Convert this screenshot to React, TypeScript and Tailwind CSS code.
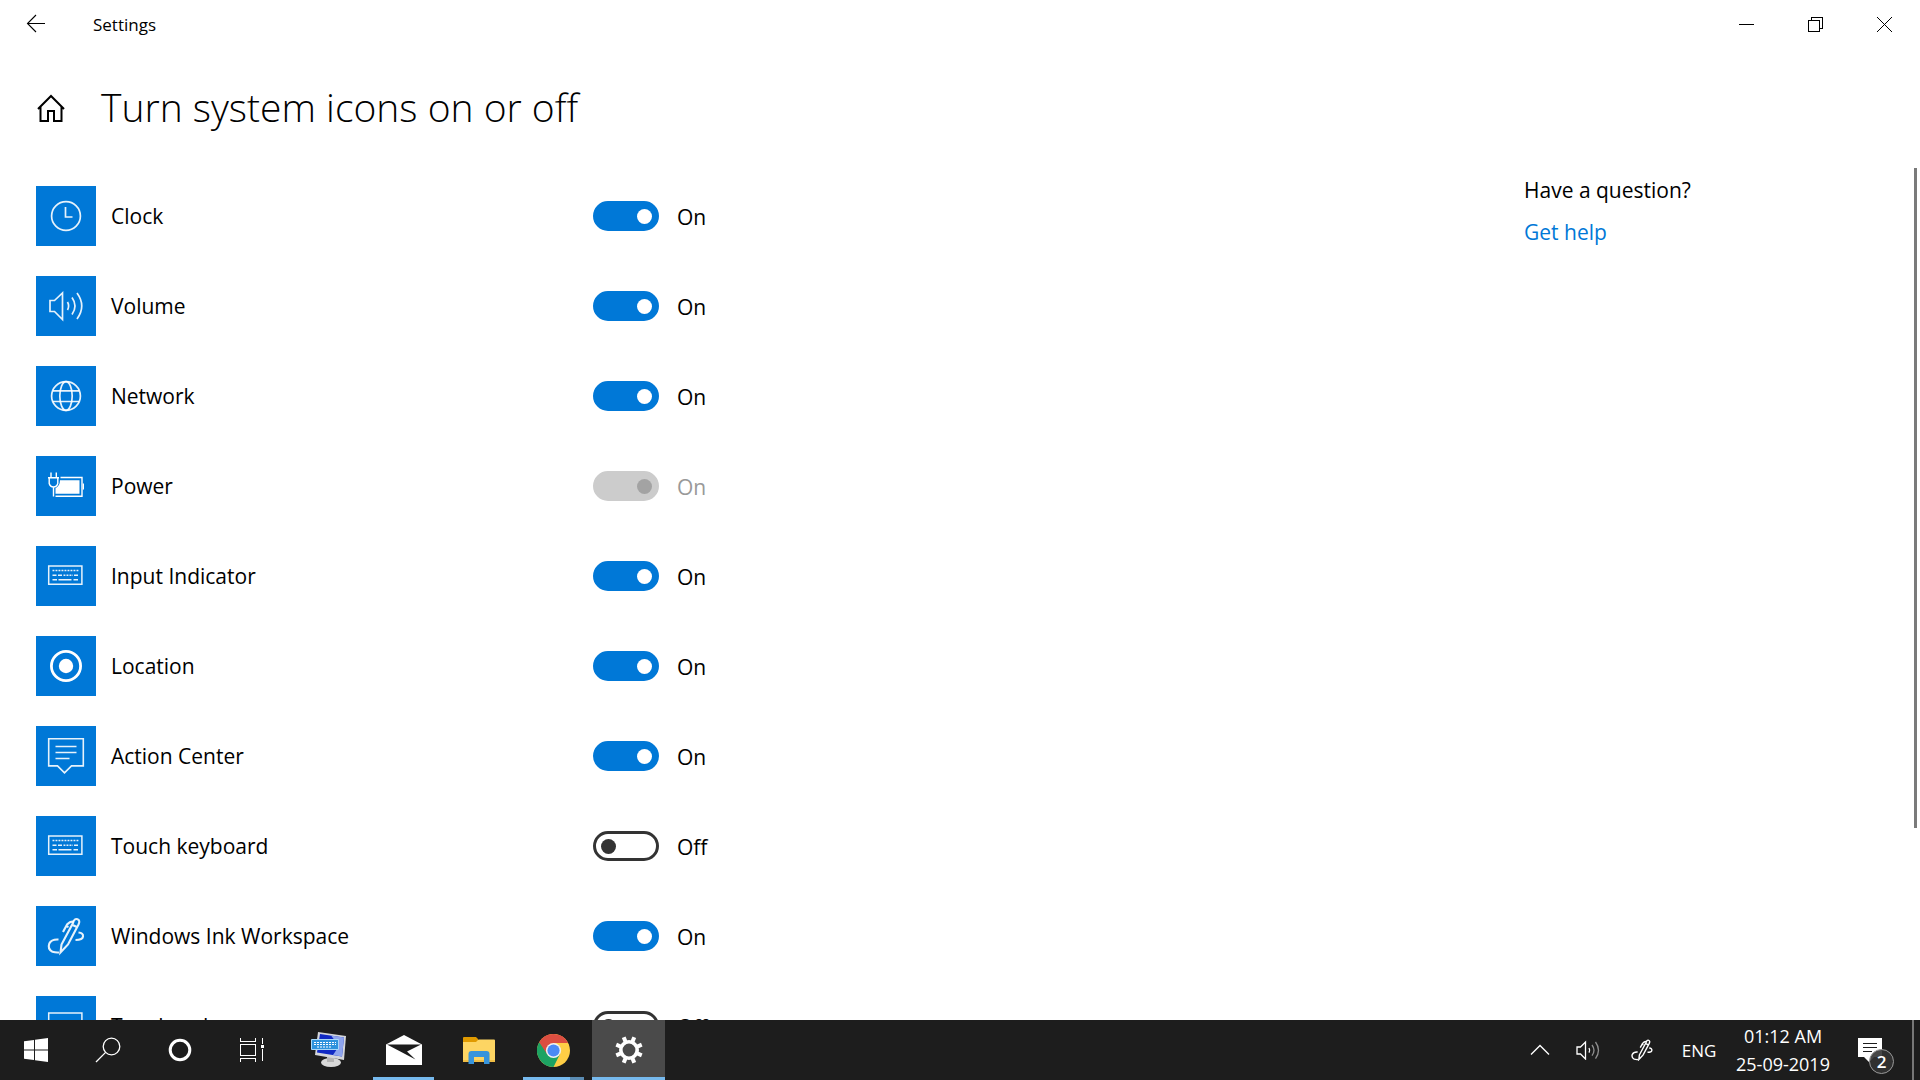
import React, { useState } from "react";
import type { ReactNode } from "react";

const stroke = { fill: "none", stroke: "currentColor" } as const;

function ClockIcon() {
  return (
    <svg viewBox="0 0 60 60" className="size-15" {...stroke} strokeWidth="1.7" aria-hidden="true">
      <circle cx="30" cy="30" r="14.4" />
      <path d="M29.5 21v10h7" />
    </svg>
  );
}

function VolumeIcon() {
  return (
    <svg viewBox="0 0 60 60" className="size-15" {...stroke} strokeWidth="1.7" aria-hidden="true">
      <path d="M14 24.5h4.5l8-7.5v26.5l-8-8H14z" />
      <path d="M31.5 26q2.2 4 0 8M36 21.500q6 8.500 0 17M41 17q9.500 13 0 26" />
    </svg>
  );
}

function NetworkIcon() {
  return (
    <svg viewBox="0 0 60 60" className="size-15" {...stroke} strokeWidth="1.7" aria-hidden="true">
      <circle cx="30" cy="30" r="14.4" />
      <ellipse cx="30" cy="30" rx="6.2" ry="14.4" />
      <path d="M17 24.8h26M17 35.5h26" />
    </svg>
  );
}

function PowerIcon() {
  return (
    <svg viewBox="0 0 60 60" className="size-15 text-white" {...stroke} strokeWidth="1.4" aria-hidden="true">
      <path d="M24.5 21.5h21.5v18.800H19.500" />
      <path d="M46.700 27.500h1.300v6h-1.300z" fill="currentColor" stroke="none" />
      <path d="M24 24.200h19.500v13.500H19.500v-5.500q4.500-2.500 4.500-8z" fill="currentColor" stroke="none" />
      <path d="M12 21.800h11M13.200 22v5.500q1 3.500 4.300 3.500t4.300-3.500V22M15 21.500v-5M20.300 21.500v-5M17.500 31v9.500" />
    </svg>
  );
}

function KeyboardIcon() {
  return (
    <svg viewBox="0 0 60 60" className="size-15" {...stroke} strokeWidth="1.5" aria-hidden="true">
      <path d="M12.700 19.900h33.200v18.300H12.700z" />
      <path d="M16.500 24.600h26" strokeDasharray="1.900 1.100" />
      <path d="M16.500 29.200h4M22 29.200h15" strokeDasharray="4 1.500 1.900 1.100 1.900 1.100 1.900 1.100 1.900 1.100 1.900 1.100" />
      <path d="M38 29.200h4M16.500 33.700h4.500M22.500 33.700h13M37.500 33.700h4.500" />
    </svg>
  );
}

function LocationIcon() {
  return (
    <svg viewBox="0 0 60 60" className="size-15 text-white" {...stroke} strokeWidth="2.8" aria-hidden="true">
      <circle cx="30" cy="30" r="14.6" />
      <circle cx="30" cy="30" r="7.2" fill="currentColor" stroke="none" />
    </svg>
  );
}

function ActionCenterIcon() {
  return (
    <svg viewBox="0 0 60 60" className="size-15" {...stroke} strokeWidth="1.6" aria-hidden="true">
      <path d="M12.700 12.700h34.600v27.200H35.500l-7 7-7-7h-8.800z" />
      <path d="M19.500 20.500h21M19.500 26.500h21M19.500 32.500h14" />
    </svg>
  );
}

function PenPaths() {
  return (
    <>
      <path d="M24.500 46.500l1-8 11.500-21.500q1.500-5 4.500-3.800t1 5.300l-10.500 20zM35.500 18.500l6.500 3" />
      <path d="M38 15.500q-4-.5-7 3l-4 7.500M30 20l2.500 1" />
      <path d="M22.500 33.500q-7-.5-9.200 4-2 5.500 3.200 8.300 3 1 6.500 .7" />
      <path d="M42.500 26.500q5 .5 4.500 4-.5 3.500-7.500 3.500" />
    </>
  );
}

function InkIcon() {
  return (
    <svg viewBox="0 0 60 60" className="size-15" {...stroke} strokeWidth="2.1" aria-hidden="true">
      <PenPaths />
    </svg>
  );
}

function TouchpadIcon() {
  return (
    <svg viewBox="0 0 60 60" className="size-15" {...stroke} strokeWidth="1.5" aria-hidden="true">
      <path d="M12.700 16.900h33.200v25H12.700zM12.700 35h33.200M29.300 35v7" />
    </svg>
  );
}

type Item = { name: string; icon: ReactNode; on: boolean; disabled?: boolean };

const items: Item[] = [
  { name: "Clock", icon: <ClockIcon />, on: true },
  { name: "Volume", icon: <VolumeIcon />, on: true },
  { name: "Network", icon: <NetworkIcon />, on: true },
  { name: "Power", icon: <PowerIcon />, on: true, disabled: true },
  { name: "Input Indicator", icon: <KeyboardIcon />, on: true },
  { name: "Location", icon: <LocationIcon />, on: true },
  { name: "Action Center", icon: <ActionCenterIcon />, on: true },
  { name: "Touch keyboard", icon: <KeyboardIcon />, on: false },
  { name: "Windows Ink Workspace", icon: <InkIcon />, on: true },
  { name: "Touchpad", icon: <TouchpadIcon />, on: false },
];

function SettingRow({ item, id }: { item: Item; id: string }) {
  const [on, setOn] = useState(item.on);
  return (
    <li className="flex h-15 shrink-0 items-center">
      <span className="size-15 shrink-0 bg-[#0078d7] text-white/90">{item.icon}</span>
      <label htmlFor={id} className="w-[497px] pl-[15px]">
        {item.name}
      </label>
      <input
        id={id}
        type="checkbox"
        role="switch"
        checked={on}
        disabled={item.disabled}
        onChange={(e) => setOn(e.target.checked)}
        className="flex h-[30px] w-[66px] shrink-0 appearance-none items-center rounded-full border-3 border-[#333] px-[5px] before:size-[15px] before:rounded-full before:bg-[#333] checked:justify-end checked:border-[#0078d7] checked:bg-[#0078d7] checked:px-1 checked:before:bg-white disabled:border-[#ccc] disabled:bg-[#ccc] disabled:before:bg-[#a3a3a3]"
      />
      <span className={item.disabled ? "pt-0.5 pl-[18px] text-[#999]" : "pt-0.5 pl-[18px]"}>{on ? "On" : "Off"}</span>
    </li>
  );
}

function TitleBar() {
  return (
    <header className="flex h-12 shrink-0 items-center">
      <button aria-label="Back" className="flex h-12 w-[72px] items-center justify-center">
        <svg width="20" height="20" viewBox="0 0 20 20" {...stroke} strokeWidth="1.1" aria-hidden="true">
          <path d="M19 9.500H2M10 1L1.500 9.500 10 18" />
        </svg>
      </button>
      <span className="flex-1 pt-px pl-[21px] text-[17px]">Settings</span>
      <div className="flex pr-px">
        <button aria-label="Minimize" className="flex h-12 w-[69px] items-center justify-center">
          <svg width="15" height="15" viewBox="0 0 15 15" {...stroke} shapeRendering="crispEdges" aria-hidden="true">
            <path d="M0 7.500h15" />
          </svg>
        </button>
        <button aria-label="Restore" className="flex h-12 w-[69px] items-center justify-center">
          <svg width="15" height="15" viewBox="0 0 15 15" {...stroke} shapeRendering="crispEdges" aria-hidden="true">
            <path d="M.5 3.500h11v11H.5zM3.500 3.500v-3h11v11h-3" />
          </svg>
        </button>
        <button aria-label="Close" className="flex h-12 w-[69px] items-center justify-center">
          <svg width="15" height="15" viewBox="0 0 15 15" {...stroke} aria-hidden="true">
            <path d="M0 0l15 15M15 0L0 15" />
          </svg>
        </button>
      </div>
    </header>
  );
}

function MonitorIcon() {
  return (
    <svg width="36" height="38" viewBox="0 0 36 38" aria-hidden="true">
      <ellipse cx="20" cy="31.500" rx="10" ry="4.500" fill="#d9d9d9" />
      <path d="M16 25h7v6h-7z" fill="#b5b5b5" />
      <path d="M7 1l28 4-2 24-29-5z" fill="#d4d6da" />
      <path d="M9 3l24 3.500-2 19L6 21.500z" fill="#1029c4" />
      <path d="M20 4.600L33 6.500l-2 19-9-1.500 6-9z" fill="#8ea4ee" />
      <path d="M.5 8.500h27v10H.5z" fill="#2f93dd" stroke="#a9d8f8" />
      <path d="M3 11.500h22M3 13.500h22M6 16h15" stroke="#fff" strokeWidth="1.2" strokeDasharray="2 1" />
    </svg>
  );
}

function MailIcon() {
  return (
    <svg width="36" height="30" viewBox="0 0 36 30" aria-hidden="true">
      <path d="M0 9.500L18 0l18 9.500V30H0z" fill="#fff" />
      <path d="M1 9.500h34L21 16.500l8.500 8z" fill="#1d1d1d" />
    </svg>
  );
}

function FolderIcon() {
  return (
    <svg width="32" height="27" viewBox="0 0 32 27" aria-hidden="true">
      <path d="M0 1q0-1 1-1h12l2 2v4H0z" fill="#e09a00" />
      <path d="M0 5h13l2.500-2.500H31q1 0 1 1V25H0z" fill="#fdd563" />
      <path d="M0 23h32v2H0z" fill="#f0bd45" />
      <path d="M5.500 27V17q0-3 3-3h15q3 0 3 3v10h-5.500v-7H11v7z" fill="#3794dc" />
    </svg>
  );
}

function ChromeIcon() {
  return (
    <svg width="33" height="33" viewBox="-16.5 -16.5 33 33" aria-hidden="true">
      <circle r="16.5" fill="#ffce45" />
      <path d="M0 0L-14.300-8.250A16.500 16.500 0 0 0 0 16.500L6.500 3.500z" fill="#1da362" />
      <path d="M-6.500 3.500L-14.300-8.250A16.500 16.500 0 0 1 14.600-7.600H0z" fill="#dc4e41" />
      <circle r="7.6" fill="#f1f1f1" />
      <circle r="6.1" fill="#4a8af5" />
    </svg>
  );
}

function GearIcon() {
  return (
    <svg width="28" height="28" viewBox="-14 -14 28 28" {...stroke} aria-hidden="true">
      <circle r="8.2" strokeWidth="3.6" />
      {[22.5, 67.5, 112.5, 157.5, 202.5, 247.5, 292.5, 337.5].map((a) => (
        <path key={a} d="M-2-9h4v-4.800h-4z" fill="currentColor" stroke="none" transform={`rotate(${a})`} />
      ))}
    </svg>
  );
}

function TaskButton({ label, children }: { label: string; children: ReactNode }) {
  return (
    <button aria-label={label} className="flex w-[72px] items-center justify-center">
      {children}
    </button>
  );
}

function Taskbar() {
  return (
    <footer className="flex h-15 shrink-0 bg-[#1d1d1d] text-white">
      <TaskButton label="Start">
        <svg width="24" height="24" viewBox="0 0 24 24" fill="currentColor" aria-hidden="true">
          <path d="M0 3.300l10-1.300v9.500H0zM11 1.800L24 0v11.500H11zM0 12.500h10V22L0 20.700zM11 12.500h13V24l-13-1.800z" />
        </svg>
      </TaskButton>
      <TaskButton label="Search">
        <svg width="26" height="26" viewBox="0 0 26 26" {...stroke} strokeWidth="1.3" aria-hidden="true">
          <circle cx="16.500" cy="9.500" r="8.300" />
          <path d="M10.600 15.400L1 25" />
        </svg>
      </TaskButton>
      <TaskButton label="Cortana">
        <svg width="24" height="24" viewBox="0 0 24 24" {...stroke} strokeWidth="3" aria-hidden="true">
          <circle cx="12" cy="12" r="9.8" />
        </svg>
      </TaskButton>
      <TaskButton label="Task View">
        <svg width="25" height="24" viewBox="0 0 25 24" {...stroke} shapeRendering="crispEdges" aria-hidden="true">
          <path d="M.5 0v3.500h15V0M.5 6.500h15v11H.5zM.5 24v-3.500h15V24M22.500 0v6M22.500 11v12" />
          <path d="M21 7h3v3h-3z" fill="currentColor" stroke="none" />
        </svg>
      </TaskButton>
      <div className="flex gap-0.5 pl-1">
        <button aria-label="On-Screen Keyboard" className="flex w-[73px] items-center justify-center">
          <MonitorIcon />
        </button>
        <button aria-label="Mail" className="flex w-[73px] flex-col items-center">
          <span className="flex flex-1 items-center">
            <MailIcon />
          </span>
          <span className="-mt-[3px] h-[3px] w-[61px] bg-[#76b9ed]" />
        </button>
        <button aria-label="File Explorer" className="flex w-[73px] items-center justify-center">
          <FolderIcon />
        </button>
        <button aria-label="Google Chrome" className="flex w-[73px] flex-col items-center">
          <span className="flex flex-1 items-center">
            <ChromeIcon />
          </span>
          <span className="-mt-[3px] h-[3px] w-[61px] border-r-[14px] border-[#5b8cb3] bg-[#76b9ed]" />
        </button>
        <button aria-label="Settings" className="flex w-[73px] flex-col items-center bg-[#4a4a4a]">
          <span className="flex flex-1 items-center">
            <GearIcon />
          </span>
          <span className="-mt-[3px] h-[3px] w-full bg-[#76b9ed]" />
        </button>
      </div>
      <div className="ml-auto flex items-center">
        <button aria-label="Show hidden icons" className="flex h-full w-12 items-center justify-center">
          <svg width="20" height="12" viewBox="0 0 20 12" {...stroke} strokeWidth="1.4" aria-hidden="true">
            <path d="M1 10.500l9-9 9 9" />
          </svg>
        </button>
        <button aria-label="Volume" className="flex h-full w-12 items-center justify-center">
          <svg width="24" height="20" viewBox="0 0 24 20" {...stroke} strokeWidth="1.3" aria-hidden="true">
            <path d="M1 7h3.500L9.500 2v17l-5-5H1z" />
            <path d="M13 8q1.500 2.300 0 4.600" />
            <path d="M16 5q4 5.300 0 10.600M19.500 2q6 8.300 0 16.600" opacity=".5" />
          </svg>
        </button>
        <button aria-label="Windows Ink Workspace" className="flex h-full w-15 items-center justify-center">
          <svg width="22" height="22" viewBox="11 11 38 38" {...stroke} strokeWidth="2.4" aria-hidden="true">
            <PenPaths />
          </svg>
        </button>
        <button className="h-full w-[54px] pt-px text-[17px]">ENG</button>
        <button className="flex h-full w-[114px] flex-col items-center justify-center text-[18px] leading-7">
          <time>01:12 AM</time>
          <time>25-09-2019</time>
        </button>
        <button aria-label="Action Center, 2 notifications" className="relative flex h-full w-[72px] items-center pl-[18px]">
          <svg width="24" height="24" viewBox="0 0 24 24" aria-hidden="true">
            <path d="M0 0h24v19H16l-5 5-5-5H0z" fill="#fff" />
            <path d="M5 5.500h14M5 9.500h14M5 13.500h9" stroke="#1d1d1d" />
          </svg>
          <span className="absolute top-[29px] left-[29px] flex size-[25px] items-center justify-center rounded-full border border-[#999] bg-[#333]/90 text-[17px] font-semibold">
            2
          </span>
        </button>
        <button aria-label="Show desktop" className="h-full w-2 border-l-2 border-[#777]" />
      </div>
    </footer>
  );
}

export default function App() {
  return (
    <div className="flex h-screen flex-col bg-white font-['Open_Sans','Noto_Sans',sans-serif] text-[21px] leading-7 text-black">
      <TitleBar />
      <div className="flex h-[120px] shrink-0 items-center pl-9">
        <button aria-label="Home" className="flex h-15 items-center">
          <svg width="29" height="28" viewBox="0 0 29 28" {...stroke} strokeWidth="2" aria-hidden="true">
            <path d="M2 15L15 2l13 13M4.500 13v14H12V17h6v10h7.500V13" />
          </svg>
        </button>
        <h1 className="pb-0.5 pl-9 text-[39px] leading-[52px] font-light">Turn system icons on or off</h1>
      </div>
      <main className="flex min-h-0 flex-1 overflow-hidden">
        <ul className="flex flex-1 flex-col gap-[30px] pt-[18px] pl-9">
          {items.map((item, i) => (
            <SettingRow key={item.name} item={item} id={`system-icon-${i}`} />
          ))}
        </ul>
        <aside className="w-[390px] pt-2">
          <h2>Have a question?</h2>
          <a href="#help" className="mt-3.5 block text-[#0078d7]">
            Get help
          </a>
        </aside>
        <div className="flex w-1.5 flex-col">
          <div className="h-[660px] w-[3px] bg-[#7a7a7a]" />
        </div>
      </main>
      <Taskbar />
    </div>
  );
}
